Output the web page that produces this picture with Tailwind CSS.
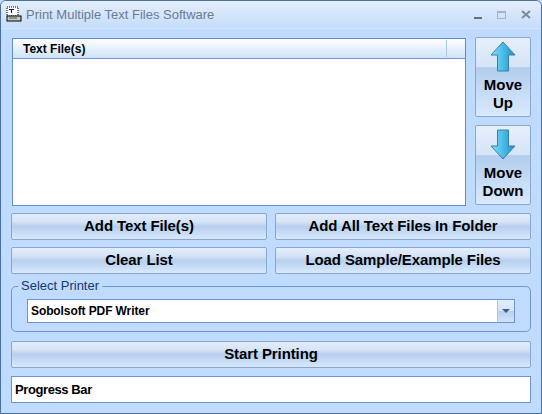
<!DOCTYPE html>
<html lang="en">
<head>
    <meta charset="utf-8">
    <script src="https://cdn.jsdelivr.net/npm/@tailwindcss/browser@4"></script>
    <title>Print Multiple Text Files Software</title>
</head>
<body class="m-0 overflow-hidden bg-[#bfdbff]">
    <div class="w-[542px] h-[414px] flex flex-col bg-[#bfdbff] border border-[#4a6f9f] rounded-t-[6px] font-['Liberation_Sans',sans-serif] text-black overflow-hidden">
        <!-- title bar -->
        <div class="h-[28px] shrink-0 flex items-center pl-[5px] pr-[10px] bg-gradient-to-b from-[#e3eefc] to-[#c5dcfa] border-b border-[#d6e6fb]">
            <svg width="17" height="17" viewBox="0 0 17 17" class="shrink-0">
                <rect x="1" y="1" width="11" height="9" fill="#fff" stroke="#000" stroke-dasharray="1 1"/>
                <path d="M3 3h5v1H6v3H5V4H3z" fill="#0000a8"/>
                <rect x="1" y="10" width="14" height="5" fill="#c8c8c8" stroke="#000"/>
                <path d="M3 12h8" stroke="#555"/>
            </svg>
            <span class="ml-[3px] text-[13px] text-[#6d7b8f]">Print Multiple Text Files Software</span>
            <div class="ml-auto flex items-center gap-[15px]">
                <span class="block w-[8px] h-[2px] mt-[6px] bg-[#5f6f86]"></span>
                <span class="block w-[9px] h-[8px] border border-[#a6b3c4] border-t-[2px]"></span>
                <svg width="10" height="9" viewBox="0 0 10 9"><path d="M1 1l8 7M9 1L1 8" stroke="#7d8a9c" stroke-width="2"/></svg>
            </div>
        </div>
        <!-- client -->
        <div class="flex-1 flex flex-col px-[10px] pt-[9px]">
            <div class="flex gap-[9px] h-[168px] items-stretch">
                <div class="w-[454px] bg-white border border-[#5f8dc8] ml-px">
                    <div class="h-[20px] flex items-center bg-gradient-to-b from-white to-[#cfe2fa] border-b border-[#6f9ad2] text-[12px] font-bold pl-[10px]">
                        <span class="w-[423px]">Text File(s)</span>
                        <span class="w-px h-[17px] bg-[#a9c8ec]"></span>
                    </div>
                </div>
                <div class="w-[56px] flex flex-col gap-[8px] -mt-px">
                    <button class="h-[80px] flex flex-col items-center border border-[#8aa8cf] rounded-[2px] bg-[linear-gradient(#e6effb_0%,#d6e4f7_37%,#b3cdec_38%,#c6dcf6_70%,#d9e9fc_100%)] text-[15px] leading-[18px] font-bold">
                        <svg width="26" height="31" viewBox="0 0 26 31" class="mt-[3px] mb-[4px] shrink-0">
                            <defs><linearGradient id="up" x1="0" x2="1" y1="0" y2="0"><stop offset="0" stop-color="#86def7"/><stop offset="0.5" stop-color="#48bce8"/><stop offset="1" stop-color="#1c8fca"/></linearGradient></defs>
                            <path d="M13 1L25 14H18.500V30H7.500V14H1z" fill="url(#up)" stroke="#3a7fa8" stroke-width="1"/>
                        </svg>
                        <span>Move</span><span>Up</span>
                    </button>
                    <button class="h-[80px] flex flex-col items-center border border-[#8aa8cf] rounded-[2px] bg-[linear-gradient(#e6effb_0%,#d6e4f7_37%,#b3cdec_38%,#c6dcf6_70%,#d9e9fc_100%)] text-[15px] leading-[18px] font-bold">
                        <svg width="26" height="31" viewBox="0 0 26 31" class="mt-[3px] mb-[4px] shrink-0">
                            <defs><linearGradient id="down" x1="0" x2="1" y1="0" y2="0"><stop offset="0" stop-color="#86def7"/><stop offset="0.5" stop-color="#48bce8"/><stop offset="1" stop-color="#1c8fca"/></linearGradient></defs>
                            <path d="M13 30L25 17H18.500V1H7.500V17H1z" fill="url(#down)" stroke="#3a7fa8" stroke-width="1"/>
                        </svg>
                        <span>Move</span><span>Down</span>
                    </button>
                </div>
            </div>
            <div class="grid grid-cols-2 gap-x-[8px] gap-y-[7px] mt-[7px]">
                <button class="h-[27px] border border-[#8aa8cf] rounded-[2px] bg-[linear-gradient(#e3edfb_0%,#d6e4f7_30%,#b8d0ee_50%,#c6dcf6_75%,#d9e9fc_100%)] text-[15px] tracking-[-0.1px] font-bold">Add Text File(s)</button>
                <button class="h-[27px] border border-[#8aa8cf] rounded-[2px] bg-[linear-gradient(#e3edfb_0%,#d6e4f7_30%,#b8d0ee_50%,#c6dcf6_75%,#d9e9fc_100%)] text-[15px] tracking-[-0.1px] font-bold">Add All Text Files In Folder</button>
                <button class="h-[27px] border border-[#8aa8cf] rounded-[2px] bg-[linear-gradient(#e3edfb_0%,#d6e4f7_30%,#b8d0ee_50%,#c6dcf6_75%,#d9e9fc_100%)] text-[15px] tracking-[-0.1px] font-bold">Clear List</button>
                <button class="h-[27px] border border-[#8aa8cf] rounded-[2px] bg-[linear-gradient(#e3edfb_0%,#d6e4f7_30%,#b8d0ee_50%,#c6dcf6_75%,#d9e9fc_100%)] text-[15px] tracking-[-0.1px] font-bold">Load Sample/Example Files</button>
            </div>
            <!-- printer group -->
            <div class="relative mt-[12px] h-[46px] border border-[#6f96cc] rounded-[5px] px-[15px] pt-[12px]">
                <span class="absolute left-[6px] -top-[8px] px-[3px] bg-[#bfdbff] text-[13px] leading-[14px] text-[#15396f]">Select Printer</span>
                <div class="h-[24px] flex bg-white border border-[#6f96cc]">
                    <span class="flex-1 pl-[3px] text-[12px] tracking-[-0.1px] leading-[22px] font-bold">Sobolsoft PDF Writer</span>
                    <span class="w-[17px] flex items-center justify-center border-l border-[#a9c8ec] bg-[linear-gradient(#e3edfb_0%,#d6e4f7_50%,#b8d0ee_51%,#d0e2f8_100%)]">
                        <span class="block border-x-[4px] border-t-[4px] border-x-transparent border-t-[#3b5f8f]"></span>
                    </span>
                </div>
            </div>
            <button class="mt-[9px] h-[27px] border border-[#8aa8cf] rounded-[2px] bg-[linear-gradient(#e3edfb_0%,#d6e4f7_30%,#b8d0ee_50%,#c6dcf6_75%,#d9e9fc_100%)] text-[15px] tracking-[-0.1px] font-bold">Start Printing</button>
            <div class="mt-[8px] h-[27px] bg-white border border-[#6f96cc] pl-[3px] text-[13px] tracking-[-0.4px] leading-[25px] font-bold">Progress Bar</div>
        </div>
    </div>
</body>
</html>
